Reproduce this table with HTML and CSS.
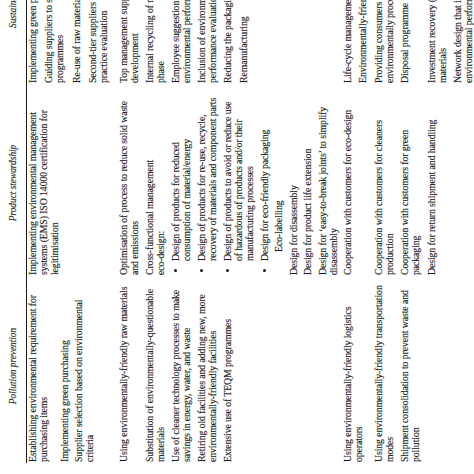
FILE: index.html
```html
<!DOCTYPE html>
<html lang="en">
<head>
<meta charset="utf-8">
<title>Green supply chain practices</title>
<link rel="stylesheet" href="styles.css">
</head>
<body>
<div class="sheet">
  <div class="table">
    <div class="cols head">
      <div class="hc hc1">Pollution prevention</div>
      <div class="hc hc2">Product stewardship</div>
      <div class="hc hc3">Sustainable development</div>
    </div>

    <div class="cols grp-a">
      <div class="cell c1">
        <p class="it">Establishing environmental requirement for<br>purchasing items</p>
        <p class="it m10">Implementing green purchasing</p>
        <p class="it m3">Supplier selection based on environmental<br>criteria</p>
      </div>
      <div class="cell c2">
        <p class="it">Implementing environmental management<br>systems (EMS) ISO 14000 certification for<br>legitimisation</p>
      </div>
      <div class="cell c3">
        <p class="it">Implementing green purchasing</p>
        <p class="it m5">Guiding suppliers to set up their own<br>programmes</p>
        <p class="it m6">Re-use of raw materials</p>
        <p class="it m5">Second-tier suppliers environmentally-friendly<br>practice evaluation</p>
      </div>
    </div>

    <div class="cols grp-b">
      <div class="cell c1"><p class="it">Using environmentally-friendly raw materials</p></div>
      <div class="cell c2"><p class="it">Optimisation of process to reduce solid waste<br>and emissions</p></div>
      <div class="cell c3"><p class="it">Top management support for sustainable<br>development</p></div>

      <div class="cell c1"><p class="it">Substitution of environmentally-questionable<br>materials</p></div>
      <div class="cell c2"><p class="it">Cross-functional management<br>eco-design:</p></div>
      <div class="cell c3"><p class="it">Internal recycling of materials within the production<br>phase</p></div>

      <div class="cell c1"><p class="it">Use of cleaner technology processes to make<br>savings in energy, water, and waste</p></div>
      <div class="cell c2"><p class="it bul">Design of products for reduced<br>consumption of material/energy</p></div>
      <div class="cell c3"><p class="it">Employee suggestion for improving the<br>environmental performance</p></div>

      <div class="cell c1"><p class="it">Retiring old facilities and adding new, more<br>environmentally-friendly facilities</p></div>
      <div class="cell c2"><p class="it bul">Design of products for re-use, recycle,<br>recovery of materials and component parts</p></div>
      <div class="cell c3"><p class="it">Inclusion of environmental considerations in<br>performance evaluation</p></div>

      <div class="cell c1"><p class="it">Extensive use of TEQM programmes</p></div>
      <div class="cell c2 stack35">
        <p class="it bul">Design of products to avoid or reduce use<br>of hazardous of products and/or their<br>manufacturing processes</p>
        <p class="it bul">Design for eco-friendly packaging</p>
        <p class="it sub">Eco-labelling</p>
        <p class="it">Design for disassembly</p>
        <p class="it">Design for product life extension</p>
        <p class="it">Design for ‘easy-to-break joints’ to simplify<br>disassembly</p>
      </div>
      <div class="cell c3 stack45">
        <p class="it">Reducing the packaging waste</p>
        <p class="it">Remanufacturing</p>
      </div>
    </div>

    <div class="cols grp-c">
      <div class="cell c1"><p class="it">Using environmentally-friendly logistics<br>operators</p></div>
      <div class="cell c2"><p class="it">Cooperation with customers for eco-design</p></div>
      <div class="cell c3 stack4">
        <p class="it">Life-cycle management</p>
        <p class="it">Environmentally-friendly disposal</p>
      </div>

      <div class="cell c1"><p class="it">Using environmentally-friendly transportation<br>modes</p></div>
      <div class="cell c2"><p class="it">Cooperation with customers for cleaners<br>production</p></div>
      <div class="cell c3"><p class="it">Providing consumers with information on<br>environmentally processed products</p></div>

      <div class="cell c1"><p class="it">Shipment consolidation to prevent waste and<br>pollution</p></div>
      <div class="cell c2"><p class="it">Cooperation with customers for green<br>packaging</p></div>
      <div class="cell c3"><p class="it">Disposal programme for consumers</p></div>

      <div class="cell c1"></div>
      <div class="cell c2"><p class="it">Design for return shipment and handling</p></div>
      <div class="cell c3 stack45">
        <p class="it">Investment recovery (sale) of excess<br>materials</p>
        <p class="it">Network design that improves the<br>environmental performance</p>
      </div>
    </div>
  </div>
</div>
</body>
</html>
```

FILE: styles.css
```css
html, body {
  margin: 0;
  padding: 0;
  background: #ffffff;
}

body {
  width: 474px;
  height: 474px;
  overflow: hidden;
}

.sheet {
  width: 474px;
  height: 474px;
  overflow: hidden;
  transform: rotate(-90deg);
  transform-origin: 50% 50%;
  background: #ffffff;
  font-family: "Liberation Serif", "Times New Roman", serif;
  font-size: 9.8px;
  letter-spacing: -0.1px;
  line-height: 11px;
  color: #181818;
  -webkit-text-stroke: 0.15px #333333;
}

.table {
  margin-left: 11px;
  width: 620px;
}

.cols {
  display: grid;
  grid-template-columns: 188px 192px 240px;
}

.head {
  padding-top: 8px;
  height: 18px;
  border-bottom: 1.6px solid #1c1c1c;
  font-style: italic;
  font-size: 9.3px;
  letter-spacing: 0;
  line-height: 11px;
  color: #2a2a2a;
}

.hc {
  white-space: nowrap;
}

.hc1 {
  text-align: center;
  padding-left: 6px;
}

.hc2 {
  text-align: center;
  padding-right: 8px;
}

.hc3 {
  padding-left: 55px;
}

.cell {
  display: flex;
  flex-direction: column;
}

.c1 {
  padding-left: 1px;
}

.it {
  margin: 0;
  white-space: nowrap;
}

.m3 { margin-top: 3px; }
.m5 { margin-top: 5px; }
.m6 { margin-top: 6px; }
.m10 { margin-top: 10px; }

.grp-a {
  height: 91px;
}

.grp-b {
  row-gap: 4px;
}

.grp-c {
  margin-top: 3.5px;
  row-gap: 4.5px;
}

.stack35 { gap: 3.5px; }
.stack4 { gap: 4px; }
.stack45 { gap: 4.5px; }

.bul {
  position: relative;
  padding-left: 14px;
}

.bul::before {
  content: "";
  position: absolute;
  left: 3px;
  top: 4px;
  width: 3px;
  height: 3px;
  border-radius: 50%;
  background: #1e1e1e;
}

.sub {
  padding-left: 23px;
}
```
